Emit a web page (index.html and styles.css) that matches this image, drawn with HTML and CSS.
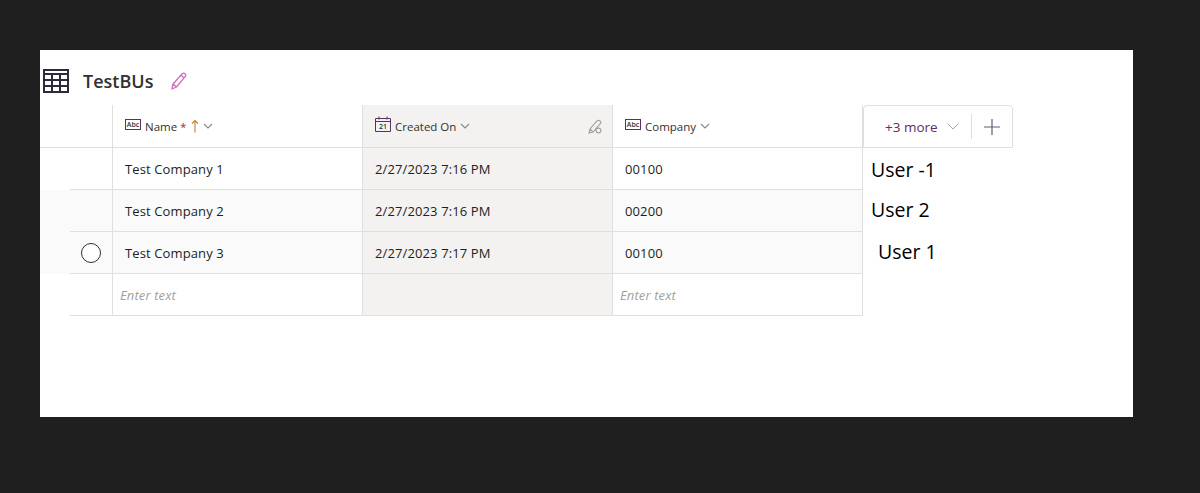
FILE: index.html
```html
<!DOCTYPE html>
<html lang="en">
<head>
<meta charset="utf-8">
<title>TestBUs</title>
<link rel="stylesheet" href="styles.css">
</head>
<body>
<main class="panel">
  <header class="title-bar">
    <svg class="table-icon" viewBox="0 0 26 24" width="26" height="24"><path d="M1 1h24v22H1zM1 5h24M1 11h24M1 17h24M9 5v18M17 5v18" fill="none" stroke="#2b2b3a" stroke-width="2"/></svg>
    <h1 class="title">TestBUs</h1>
    <svg class="pencil" viewBox="0 0 16 18" width="16" height="18"><path d="M1 17l1-5L11 2c1-1 2-1.200 3-.3s1 2 .1 3L5.500 15zM2 12l3.500 3M10 3.200l3.500 3" fill="none" stroke="#d36bb8" stroke-width="1.300" stroke-linejoin="round"/></svg>
  </header>
  <section class="grid">
    <div class="row head">
      <div class="gutter"></div>
      <div class="sel"></div>
      <div class="cell hcell">
        <svg class="ftype" viewBox="0 0 16 12" width="16" height="12"><rect x=".5" y=".5" width="15" height="10" fill="#fff" stroke="#5c2e63"/><text x="8" y="8" class="abc">Abc</text></svg>
        <span class="hname">Name</span><span class="req">*</span>
        <svg class="arrow" viewBox="0 0 8 14" width="8" height="14"><path d="M4 13.500V1.500M1 4.500l3-3 3 3" fill="none" stroke="#c8812a" stroke-width="1.100"/></svg>
        <svg class="chev" viewBox="0 0 10 6" width="10" height="6"><path d="M1 1l4 4 4-4" fill="none" stroke="#8a8886" stroke-width="1.100"/></svg>
      </div>
      <div class="cell hcell shade">
        <svg class="ftype cal" viewBox="0 0 16 16" width="16" height="16"><path d="M.5 2.500h15v13H.5zM.5 5.500h15M4 .5v3M12 .5v3" fill="#f3f2f1" stroke="#5c2e63"/><text x="8" y="13" class="abc">21</text></svg>
        <span class="hname">Created On</span>
        <svg class="chev" viewBox="0 0 10 6" width="10" height="6"><path d="M1 1l4 4 4-4" fill="none" stroke="#8a8886" stroke-width="1.100"/></svg>
        <svg class="lock" viewBox="0 0 14 15" width="14" height="15"><path d="M1 14l1-4 7-8c1-1 2-1 3 0s1 2 0 3L5 13zM2 10l3 3" fill="none" stroke="#a19f9d" stroke-width="1.100"/><circle cx="10.500" cy="11.500" r="2.500" fill="#f3f2f1" stroke="#8a8886"/></svg>
      </div>
      <div class="cell hcell">
        <svg class="ftype" viewBox="0 0 16 12" width="16" height="12"><rect x=".5" y=".5" width="15" height="10" fill="#fff" stroke="#5c2e63"/><text x="8" y="8" class="abc">Abc</text></svg>
        <span class="hname">Company</span>
        <svg class="chev" viewBox="0 0 10 6" width="10" height="6"><path d="M1 1l4 4 4-4" fill="none" stroke="#8a8886" stroke-width="1.100"/></svg>
      </div>
      <div class="more">
        <span class="more-label">+3 more</span>
        <svg class="more-chev" viewBox="0 0 12 7" width="12" height="7"><path d="M.5.500L6 6 11.500.500" fill="none" stroke="#a9a7b4" stroke-width="1"/></svg>
        <span class="divider"></span>
        <svg class="plus" viewBox="0 0 16 16" width="16" height="16"><path d="M8 0v16M0 8h16" stroke="#6b5a78" stroke-width="1.200"/></svg>
      </div>
    </div>
    <div class="row">
      <div class="gutter plain"></div><div class="sel"></div>
      <div class="cell">Test Company 1</div>
      <div class="cell shade">2/27/2023 7:16 PM</div>
      <div class="cell">00100</div>
      <div class="note">User -1</div>
    </div>
    <div class="row hover">
      <div class="gutter"></div><div class="sel"></div>
      <div class="cell">Test Company 2</div>
      <div class="cell shade">2/27/2023 7:16 PM</div>
      <div class="cell">00200</div>
      <div class="note up">User 2</div>
    </div>
    <div class="row hover">
      <div class="gutter"></div><div class="sel"><span class="radio"></span></div>
      <div class="cell">Test Company 3</div>
      <div class="cell shade">2/27/2023 7:17 PM</div>
      <div class="cell">00100</div>
      <div class="note up indent">User 1</div>
    </div>
    <div class="row">
      <div class="gutter plain"></div><div class="sel"></div>
      <div class="cell hint">Enter text</div>
      <div class="cell shade"></div>
      <div class="cell hint">Enter text</div>
    </div>
  </section>
</main>
</body>
</html>
```
FILE: styles.css
```css
* { box-sizing: border-box; }
html, body { margin: 0; height: 100%; }
body {
  background: #1f1f1f;
  padding: 50px 67px 76px 40px;
  font-family: "Open Sans", "Noto Sans", sans-serif;
  overflow: hidden;
}
.panel { background: #fff; height: 367px; padding-top: 19px; }
.title-bar { display: flex; align-items: center; height: 24px; padding-left: 3px; margin-bottom: 12px; }
.table-icon { flex: none; }
.title { margin: 0 18px 0 14px; font-size: 18px; font-weight: 600; color: #323130; line-height: 24px; }
.pencil { flex: none; }
.grid { display: flex; flex-direction: column; }
.row { display: flex; height: 42px; font-size: 13px; letter-spacing: .12px; color: #201f1e; }
.gutter { width: 30px; flex: none; }
.sel {
  width: 43px; flex: none; display: flex; align-items: center; justify-content: center;
  border-right: 1px solid #e1dfdd; border-bottom: 1px solid #e1dfdd; padding-right: 1px;
}
.radio { width: 20px; height: 20px; border: 1.300px solid #323130; border-radius: 50%; background: #fff; }
.cell {
  width: 250px; flex: none; display: flex; align-items: center; padding-left: 12px;
  border-right: 1px solid #e1dfdd; border-bottom: 1px solid #e1dfdd;
}
.shade { background: #f3f2f1; }
.hover .gutter, .hover .sel, .hover .cell:not(.shade) { background: #fafafa; }
.head { height: 43px; }
.head .gutter { border-bottom: 1px solid #e1dfdd; }
.hcell { font-size: 11.500px; font-weight: 500; letter-spacing: 0; color: #323130; }
.hcell.shade { position: relative; }
.ftype { flex: none; margin-right: 4px; margin-top: -3px; }
.ftype.cal { margin-top: -4px; }
.abc { font-family: "Open Sans", sans-serif; font-size: 7px; font-weight: 600; fill: #323130; text-anchor: middle; }
.req { color: #a4262c; margin-left: 3px; font-size: 11px; }
.arrow { flex: none; margin-left: 5px; }
.chev { flex: none; margin-left: 4px; margin-top: -1px; }
.lock { position: absolute; right: 10px; top: 14px; }
.more {
  width: 150px; flex: none; height: 43px; display: flex; align-items: center;
  border: 1px solid #e1dfdd; border-radius: 4px 4px 0 0;
  padding-left: 21px;
}
.more-label { font-size: 13.500px; font-weight: 400; letter-spacing: 0; color: #5c2e63; white-space: nowrap; width: 62px; }
.more-chev { flex: none; }
.divider { width: 1px; height: 25px; background: #e1dfdd; margin: 0 12px; flex: none; }
.plus { flex: none; }
.note { font-size: 19.500px; letter-spacing: 0; color: #000; padding-left: 8px; line-height: 44px; white-space: nowrap; }
.note.up { line-height: 40px; }
.indent { padding-left: 15px; }
.hint { font-style: italic; color: #a19f9d; padding-left: 7px; }
```
